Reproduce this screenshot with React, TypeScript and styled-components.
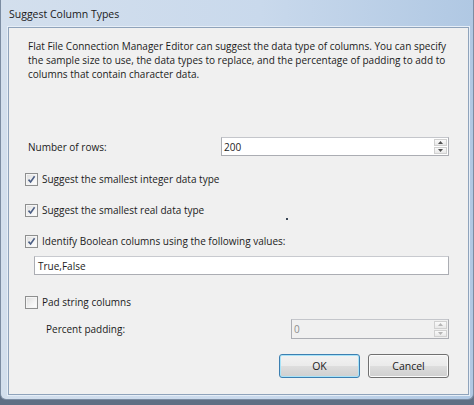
import React from 'react';
import styled, { createGlobalStyle } from 'styled-components';

const GlobalStyle = createGlobalStyle`
    html, body {
        margin: 0;
        padding: 0;
        background: #5f6f84;
        width: 474px;
        height: 405px;
        overflow: hidden;
    }
`;

const Window = styled.div`
    box-sizing: border-box;
    width: 474px;
    height: 400px;
    display: flex;
    flex-direction: column;
    padding: 0 4px 4px 7px;
    border: 1px solid #7b8ca2;
    border-top: none;
    border-radius: 0 0 6px 6px;
    background: linear-gradient(to right, #d3dfed 0%, #c9d9ec 55%, #b0c8e3 100%);
    font-family: "Open Sans", "Noto Sans", sans-serif;
    font-size: 10px;
    color: #1b1b1b;
`;

const TitleBar = styled.div`
    height: 27px;
    display: flex;
    align-items: center;
    padding-left: 1px;
    font-size: 10.5px;
    color: #1a1a1a;
`;

const Client = styled.div`
    position: relative;
    flex: 1;
    display: flex;
    flex-direction: column;
    padding: 11px 19px 16px 16px;
    background: #f0f0f0;
    border: 1px solid #8fa3bb;
    box-shadow: 0 0 0 1px #e6eef7;
`;

const Intro = styled.p`
    margin: 0 0 0 3px;
    line-height: 14px;
`;

const FieldRow = styled.div<{ $indent?: number; $top: number }>`
    display: flex;
    align-items: center;
    margin-top: ${p => p.$top}px;
    padding-left: ${p => p.$indent ?? 3}px;
`;

const Label = styled.span`
    flex: 1;
`;

const CheckRow = styled.label<{ $top: number }>`
    display: flex;
    align-items: center;
    gap: 4px;
    height: 20px;
    margin-top: ${p => p.$top}px;
`;

const Box = styled.span`
    box-sizing: border-box;
    width: 13px;
    height: 13px;
    display: flex;
    align-items: center;
    justify-content: center;
    border: 1px solid #8e8f8f;
    background: linear-gradient(135deg, #dcdcdc 0%, #f4f4f4 60%, #ffffff 100%);
    box-shadow: inset 0 0 0 1px #f5f5f5;
`;

const Spin = styled.div<{ $width: number; $disabled?: boolean }>`
    box-sizing: border-box;
    width: ${p => p.$width}px;
    height: ${p => (p.$disabled ? 20 : 19)}px;
    display: flex;
    align-items: stretch;
    border: 1px solid #abadb3;
    border-top-color: #c4c6cb;
    background: ${p => (p.$disabled ? '#f0f0f0' : '#ffffff')};
    color: ${p => (p.$disabled ? '#8d8d8d' : '#1b1b1b')};
`;

const SpinValue = styled.span`
    flex: 1;
    display: flex;
    align-items: center;
    padding-left: 2px;
`;

const SpinButtons = styled.div`
    width: 13px;
    display: flex;
    flex-direction: column;
    margin: 1px 1px 1px 0;
    gap: 1px;
`;

const SpinButton = styled.span`
    flex: 1;
    display: flex;
    align-items: center;
    justify-content: center;
    border: 1px solid #d0d0d0;
    background: linear-gradient(#fafafa, #e8e8e8);
`;

const TextBox = styled.div`
    box-sizing: border-box;
    height: 19px;
    margin: 5px 0 0 9px;
    display: flex;
    align-items: center;
    padding-left: 3px;
    border: 1px solid #abadb3;
    border-top-color: #c8cacf;
    background: #ffffff;
`;

const Buttons = styled.div`
    display: flex;
    justify-content: flex-end;
    gap: 8px;
    margin-top: auto;
`;

const Button = styled.button<{ $default?: boolean }>`
    width: 81px;
    height: 24px;
    padding: 0;
    font: inherit;
    font-size: 10.5px;
    color: #1b1b1b;
    border: 1px solid ${p => (p.$default ? '#3c7fb1' : '#707070')};
    border-radius: 3px;
    background: linear-gradient(#f2f2f2 0%, #ebebeb 48%, #dddddd 52%, #cfcfcf 100%);
    box-shadow: inset 0 0 0 1px ${p => (p.$default ? '#a8e3f8' : '#fbfbfb')};
`;

const Speck = styled.span`
    position: absolute;
    left: 277px;
    top: 190px;
    width: 2px;
    height: 2px;
    background: #3a4656;
`;

function Check({ on }: { on: boolean }) {
    return (
        <Box>
            {on && (
                <svg width="9" height="9" viewBox="0 0 9 9">
                    <path d="M1.5 4.6 L3.6 7 L7.6 1.2" fill="none" stroke="#4c5f85" strokeWidth="1.6" />
                </svg>
            )}
        </Box>
    );
}

function Arrow({ up, color }: { up?: boolean; color: string }) {
    return (
        <svg width="5" height="3" viewBox="0 0 5 3">
            <path d={up ? 'M0 3 L2.5 0 L5 3 Z' : 'M0 0 L5 0 L2.5 3 Z'} fill={color} />
        </svg>
    );
}

function Spinner({ value, width, disabled }: { value: string; width: number; disabled?: boolean }) {
    const c = disabled ? '#b5b5b5' : '#505050';
    return (
        <Spin $width={width} $disabled={disabled}>
            <SpinValue>{value}</SpinValue>
            <SpinButtons>
                <SpinButton><Arrow up color={c} /></SpinButton>
                <SpinButton><Arrow color={c} /></SpinButton>
            </SpinButtons>
        </Spin>
    );
}

export default function App() {
    return (
        <>
            <GlobalStyle />
            <Window>
                <TitleBar>Suggest Column Types</TitleBar>
                <Client>
                    <Intro>
                        Flat File Connection Manager Editor can suggest the data type of columns. You can specify
                        the sample size to use, the data types to replace, and the percentage of padding to add to
                        columns that contain character data.
                    </Intro>

                    <FieldRow $top={56}>
                        <Label>Number of rows:</Label>
                        <Spinner value="200" width={228} />
                    </FieldRow>

                    <CheckRow $top={13}>
                        <Check on />
                        Suggest the smallest integer data type
                    </CheckRow>
                    <CheckRow $top={11}>
                        <Check on />
                        Suggest the smallest real data type
                    </CheckRow>
                    <CheckRow $top={11}>
                        <Check on />
                        Identify Boolean columns using the following values:
                    </CheckRow>
                    <TextBox>True,False</TextBox>

                    <CheckRow $top={17}>
                        <Check on={false} />
                        Pad string columns
                    </CheckRow>
                    <FieldRow $top={7} $indent={21}>
                        <Label>Percent padding:</Label>
                        <Spinner value="0" width={158} disabled />
                    </FieldRow>

                    <Buttons>
                        <Button $default>OK</Button>
                        <Button>Cancel</Button>
                    </Buttons>
                    <Speck />
                </Client>
            </Window>
        </>
    );
}
